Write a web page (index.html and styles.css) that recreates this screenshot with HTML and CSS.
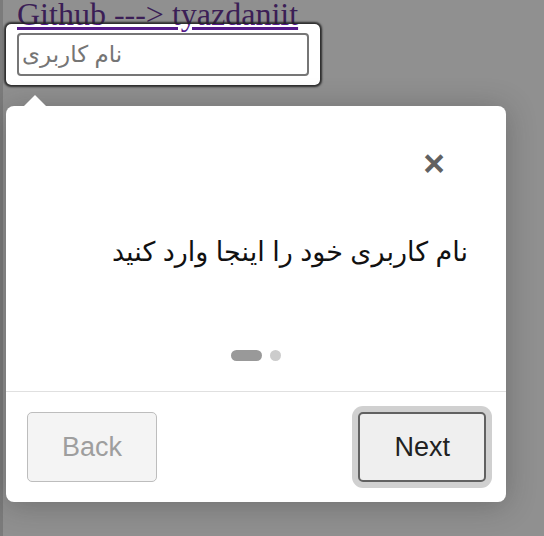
FILE: index.html
```html
<!DOCTYPE html>
<html lang="fa">
<head>
<meta charset="utf-8">
<title>Intro tour</title>
<link rel="stylesheet" href="styles.css">
</head>
<body>
  <main class="page">
    <div class="link-line"><a class="gh-link" href="#">Github ---&gt; tyazdaniit</a></div>
    <div class="field-line"><input class="username" type="text" placeholder="نام کاربری"></div>
  </main>

  <div class="helper-layer"></div>

  <div class="tooltip" role="dialog">
    <div class="tooltip-header">
      <button class="skip" type="button" aria-label="close">×</button>
    </div>
    <div class="tooltip-text" dir="rtl">نام کاربری خود را اینجا وارد کنید</div>
    <div class="bullets">
      <span class="bullet active"></span>
      <span class="bullet"></span>
    </div>
    <div class="tooltip-buttons">
      <button class="btn btn-disabled" type="button">Back</button>
      <button class="btn btn-next" type="button">Next</button>
    </div>
  </div>

  <div class="edge-strip"></div>
</body>
</html>
```

FILE: styles.css
```css
html, body {
  margin: 0;
  padding: 0;
  background: #ffffff;
  height: 100%;
  overflow: hidden;
}

.page {
  padding-left: 17px;
  margin-top: -4px;
}

.link-line {
  font-family: "Liberation Serif", "Times New Roman", serif;
  font-size: 32px;
  line-height: 36px;
}

.gh-link {
  color: #551a8b;
  text-decoration: underline;
}

.field-line {
  margin-top: 1px;
}

.username {
  box-sizing: border-box;
  width: 292px;
  height: 43px;
  margin: 0;
  padding: 0 3px;
  border: 2px solid #767676;
  border-radius: 4px;
  background: #fff;
  font-family: "Liberation Sans", "DejaVu Sans", sans-serif;
  font-size: 23px;
  color: #222;
  outline: none;
}

.username::placeholder {
  color: #757575;
}

.helper-layer {
  position: absolute;
  left: 6px;
  top: 24px;
  width: 314px;
  height: 61px;
  border-radius: 5px;
  box-shadow: 0 0 2px 2px rgba(33, 33, 33, 0.9), 0 0 0 5000px rgba(33, 33, 33, 0.5);
  z-index: 10;
  pointer-events: none;
}

.tooltip {
  position: absolute;
  left: 6px;
  top: 106px;
  width: 500px;
  height: 396px;
  box-sizing: border-box;
  background: #fff;
  border-radius: 8px;
  box-shadow: 0 3px 30px rgba(33, 33, 33, 0.3);
  display: flex;
  flex-direction: column;
  font-family: "Liberation Sans", "DejaVu Sans", Arial, sans-serif;
  z-index: 20;
}

.tooltip::before {
  content: "";
  position: absolute;
  top: -22px;
  left: 18px;
  border: 11px solid transparent;
  border-bottom-color: #fff;
}

.tooltip-header {
  display: flex;
  justify-content: flex-end;
  padding: 20px 34px 0;
}

.skip {
  width: 76px;
  height: 73px;
  padding: 0;
  margin: 0;
  border: 0;
  background: transparent;
  color: #616161;
  font-family: "Liberation Sans", Arial, sans-serif;
  font-size: 37px;
  font-weight: bold;
  line-height: 76px;
  text-align: center;
}

.tooltip-text {
  flex: 1;
  padding: 33px 38px 0;
  font-size: 27px;
  line-height: 40px;
  color: #111;
  text-align: right;
}

.bullets {
  display: flex;
  justify-content: center;
  align-items: center;
  gap: 8px;
  padding-bottom: 30px;
}

.bullet {
  display: block;
  width: 11px;
  height: 11px;
  border-radius: 6px;
  background: #cccccc;
}

.bullet.active {
  width: 31px;
  background: #999999;
}

.tooltip-buttons {
  display: flex;
  justify-content: space-between;
  align-items: center;
  border-top: 1px solid #e0e0e0;
  padding: 20px 20px 20px 21px;
}

.btn {
  box-sizing: border-box;
  height: 70px;
  margin: 0;
  padding: 0 34px;
  border-radius: 5px;
  font-family: "Liberation Sans", Arial, sans-serif;
  font-size: 27px;
  line-height: 1;
}

.btn-disabled {
  border: 1.5px solid #bdbdbd;
  background: #f4f4f4;
  color: #9e9e9e;
}

.btn-next {
  border: 2px solid #616161;
  background: #efefef;
  color: #212121;
  box-shadow: 0 0 0 6px #d0d0d0;
}

.edge-strip {
  position: absolute;
  left: 0;
  top: 0;
  bottom: 0;
  width: 3px;
  background: rgba(0, 0, 0, 0.14);
  z-index: 30;
}
```
